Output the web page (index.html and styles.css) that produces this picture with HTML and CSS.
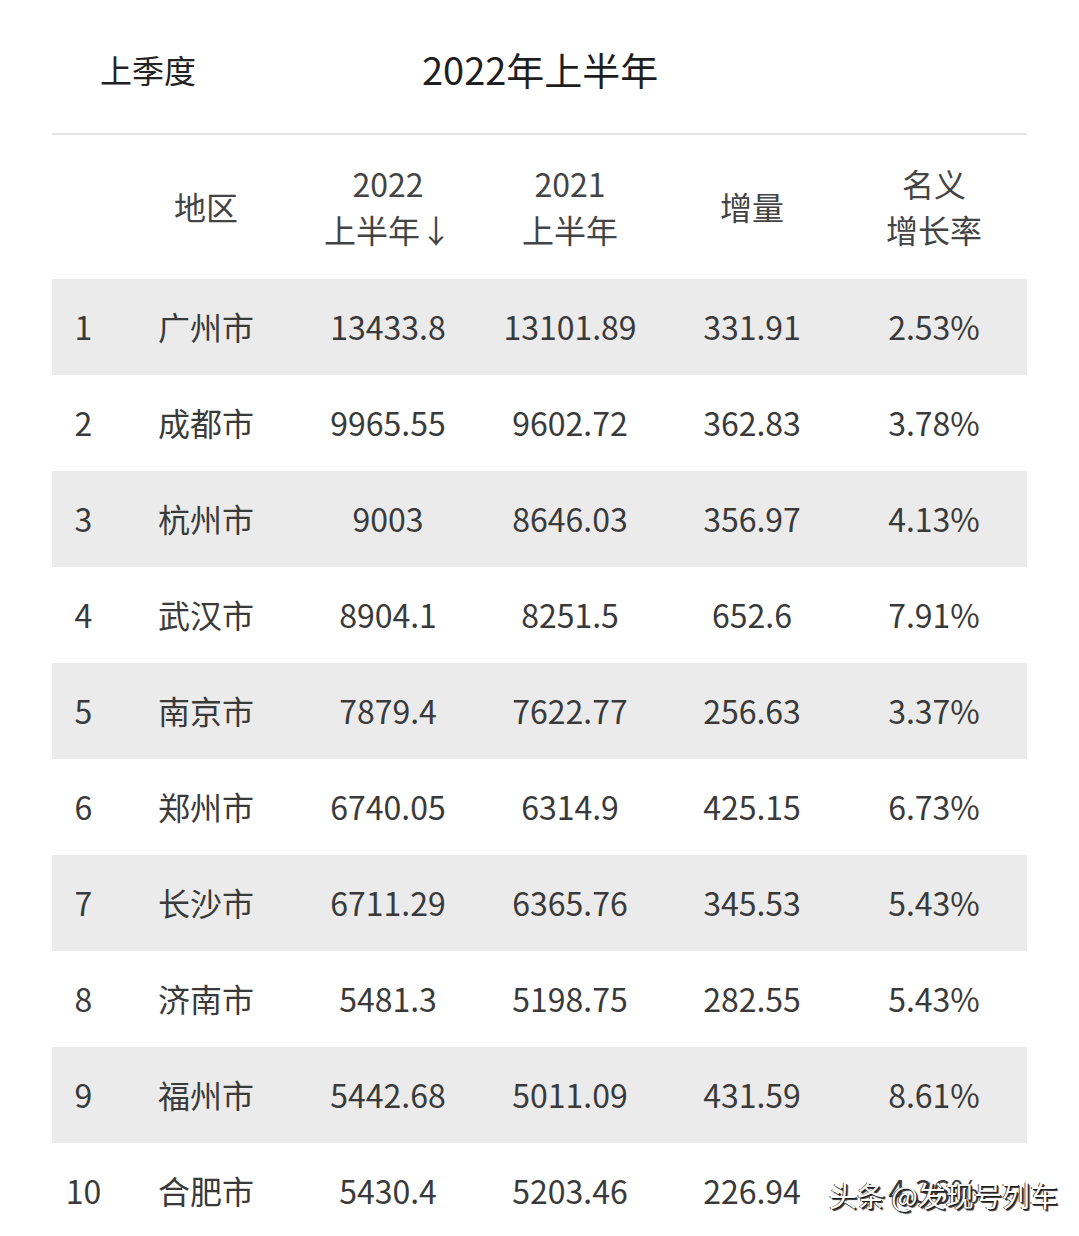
FILE: index.html
```html
<!DOCTYPE html>
<html lang="zh-CN">
<head>
<meta charset="utf-8">
<title>2022年上半年</title>
<link rel="stylesheet" href="styles.css">
</head>
<body>
<div class="page">
  <div class="titlebar">
    <span class="tab">上季度</span>
    <span class="title">2022年上半年</span>
  </div>
  <div class="table">
    <div class="row head">
      <div class="cell"></div>
      <div class="cell">地区</div>
      <div class="cell">2022<br>上半年↓</div>
      <div class="cell">2021<br>上半年</div>
      <div class="cell">增量</div>
      <div class="cell">名义<br>增长率</div>
    </div>
    <div class="row"><div class="cell">1</div><div class="cell">广州市</div><div class="cell">13433.8</div><div class="cell">13101.89</div><div class="cell">331.91</div><div class="cell">2.53%</div></div>
    <div class="row"><div class="cell">2</div><div class="cell">成都市</div><div class="cell">9965.55</div><div class="cell">9602.72</div><div class="cell">362.83</div><div class="cell">3.78%</div></div>
    <div class="row"><div class="cell">3</div><div class="cell">杭州市</div><div class="cell">9003</div><div class="cell">8646.03</div><div class="cell">356.97</div><div class="cell">4.13%</div></div>
    <div class="row"><div class="cell">4</div><div class="cell">武汉市</div><div class="cell">8904.1</div><div class="cell">8251.5</div><div class="cell">652.6</div><div class="cell">7.91%</div></div>
    <div class="row"><div class="cell">5</div><div class="cell">南京市</div><div class="cell">7879.4</div><div class="cell">7622.77</div><div class="cell">256.63</div><div class="cell">3.37%</div></div>
    <div class="row"><div class="cell">6</div><div class="cell">郑州市</div><div class="cell">6740.05</div><div class="cell">6314.9</div><div class="cell">425.15</div><div class="cell">6.73%</div></div>
    <div class="row"><div class="cell">7</div><div class="cell">长沙市</div><div class="cell">6711.29</div><div class="cell">6365.76</div><div class="cell">345.53</div><div class="cell">5.43%</div></div>
    <div class="row"><div class="cell">8</div><div class="cell">济南市</div><div class="cell">5481.3</div><div class="cell">5198.75</div><div class="cell">282.55</div><div class="cell">5.43%</div></div>
    <div class="row"><div class="cell">9</div><div class="cell">福州市</div><div class="cell">5442.68</div><div class="cell">5011.09</div><div class="cell">431.59</div><div class="cell">8.61%</div></div>
    <div class="row"><div class="cell">10</div><div class="cell">合肥市</div><div class="cell">5430.4</div><div class="cell">5203.46</div><div class="cell">226.94</div><div class="cell">4.36%</div></div>
  </div>
</div>
<div class="watermark">头条 @发现号列车</div>
</body>
</html>
```

FILE: styles.css
```css
html, body {
  margin: 0;
  padding: 0;
  background: #ffffff;
}
body {
  font-family: "Noto Sans CJK SC", "Noto Sans", sans-serif;
  color: #333333;
  width: 1079px;
  height: 1236px;
  overflow: hidden;
  position: relative;
}
.page {
  padding-left: 52px;
  width: 975px;
}
.titlebar {
  height: 135px;
  box-sizing: border-box;
  padding-top: 4px;
  padding-left: 48px;
  display: flex;
  align-items: center;
  border-bottom: 2px solid #e4e4e4;
}
.tab {
  font-size: 32px;
  color: #222222;
  width: 96px;
  line-height: 1;
}
.title {
  font-size: 38px;
  color: #1e1e1e;
  margin-left: 226px;
  line-height: 1;
}
.table {
  display: flex;
  flex-direction: column;
}
.row {
  display: grid;
  grid-template-columns: 63px repeat(5, 182px);
  height: 96px;
  align-items: center;
  font-size: 32px;
  line-height: 46px;
  color: #3a3a3a;
  padding-bottom: 2px;
  box-sizing: border-box;
}
.row:nth-child(even) {
  background: #ebebeb;
}
.row.head {
  height: 144px;
  color: #444444;
  padding-bottom: 2px;
}
.cell {
  text-align: center;
  white-space: nowrap;
}
.watermark {
  position: absolute;
  left: 829px;
  top: 1175px;
  font-size: 28px;
  line-height: 40px;
  color: #ffffff;
  text-shadow: 1px 1px 0 #1a1a1a, 2px 2px 1px #333333, -1px 0 0 #555555;
}
```
